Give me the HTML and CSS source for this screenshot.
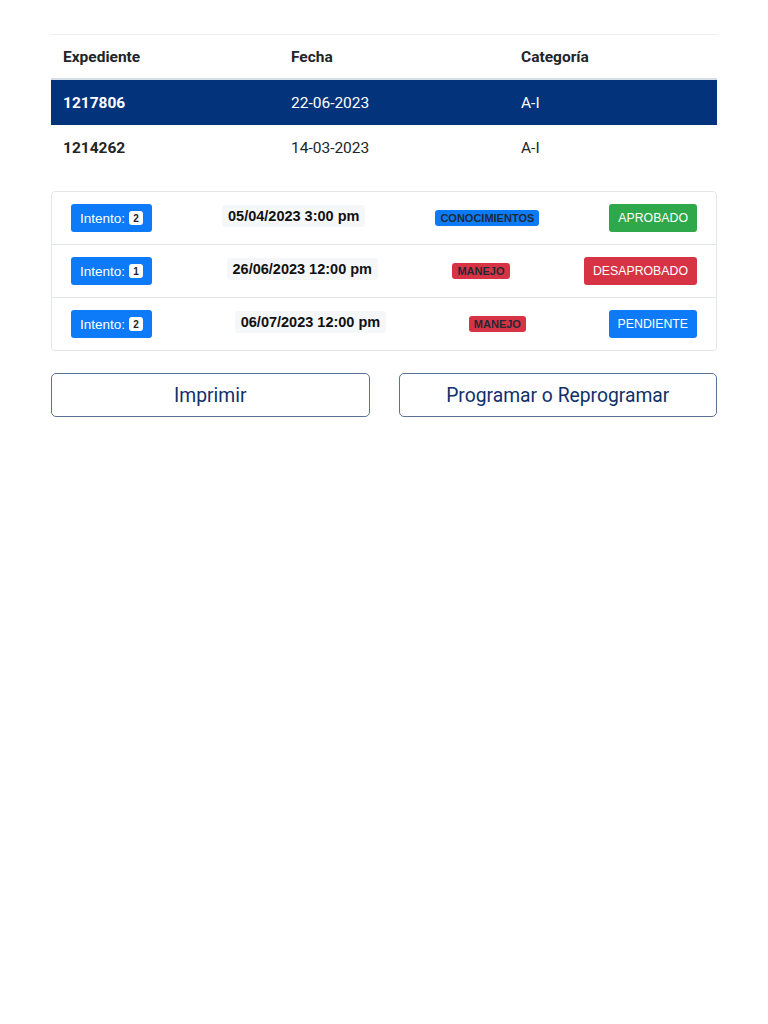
FILE: index.html
```html
<!DOCTYPE html>
<html lang="es">
<head>
    <meta charset="UTF-8">
    <title>Expedientes</title>
    <link rel="stylesheet" href="styles.css">
</head>
<body>
    <div class="container">
        <table class="exp-table">
            <thead>
                <tr>
                    <th class="col-exp">Expediente</th>
                    <th class="col-fecha">Fecha</th>
                    <th>Categoría</th>
                </tr>
            </thead>
            <tbody>
                <tr class="selected">
                    <td class="num">1217806</td>
                    <td>22-06-2023</td>
                    <td>A-I</td>
                </tr>
                <tr>
                    <td class="num">1214262</td>
                    <td>14-03-2023</td>
                    <td>A-I</td>
                </tr>
            </tbody>
        </table>

        <div class="attempts">
            <div class="attempt">
                <span class="intento">Intento: <span class="count">2</span></span>
                <span class="date">05/04/2023 3:00 pm</span>
                <span class="tag tag-blue">CONOCIMIENTOS</span>
                <span class="status status-ok">APROBADO</span>
            </div>
            <div class="attempt">
                <span class="intento">Intento: <span class="count">1</span></span>
                <span class="date">26/06/2023 12:00 pm</span>
                <span class="tag tag-red">MANEJO</span>
                <span class="status status-fail">DESAPROBADO</span>
            </div>
            <div class="attempt">
                <span class="intento">Intento: <span class="count">2</span></span>
                <span class="date">06/07/2023 12:00 pm</span>
                <span class="tag tag-red">MANEJO</span>
                <span class="status status-wait">PENDIENTE</span>
            </div>
        </div>

        <div class="actions">
            <button class="btn">Imprimir</button>
            <button class="btn">Programar o Reprogramar</button>
        </div>
    </div>
</body>
</html>
```

FILE: styles.css
```css
body {
    margin: 0;
    background-color: #ffffff;
    font-family: Roboto, "Noto Sans", sans-serif;
    color: #212529;
}

.container {
    width: 666px;
    margin: 0 auto;
    padding-top: 34px;
}

.exp-table {
    width: 100%;
    border-collapse: collapse;
    font-size: 15.5px;
    border-top: 1px solid #eceef0;
}

.exp-table th,
.exp-table td {
    text-align: left;
    padding: 0 12px;
}

.exp-table th {
    height: 43px;
    font-weight: bold;
    border-bottom: 2px solid #d6dde6;
}

.exp-table td {
    height: 45px;
}

.col-exp {
    width: 204px;
}

.col-fecha {
    width: 206px;
}

.exp-table .num {
    font-weight: bold;
}

.exp-table tr.selected {
    background-color: #03337b;
    color: #ffffff;
}

.attempts {
    margin-top: 21px;
    border: 1px solid #e3e6e9;
    border-radius: 4px;
    font-family: "Liberation Sans", Arial, sans-serif;
}

.attempt {
    display: flex;
    align-items: center;
    justify-content: space-between;
    height: 52px;
    padding: 0 19px;
    border-bottom: 1px solid #e3e6e9;
}

.attempt:last-child {
    border-bottom: none;
}

.intento {
    display: flex;
    align-items: center;
    gap: 4px;
    height: 28px;
    padding: 0 9px;
    background-color: #0d7bf7;
    color: #ffffff;
    border-radius: 3px;
    font-size: 13.5px;
}

.count {
    display: inline-flex;
    align-items: center;
    justify-content: center;
    width: 14px;
    height: 14px;
    background-color: #ffffff;
    color: #212529;
    border-radius: 3px;
    font-size: 10px;
    font-weight: bold;
}

.date {
    margin-top: -4px;
    padding: 3px 6px;
    background-color: #f6f7f8;
    border-radius: 3px;
    font-size: 14.5px;
    font-weight: bold;
    color: #111111;
}

.tag {
    padding: 2px 5px;
    border-radius: 3px;
    font-size: 11px;
    font-weight: bold;
    color: #1f2a36;
}

.tag-blue {
    background-color: #0d7bf7;
}

.tag-red {
    background-color: #d63345;
}

.status {
    display: flex;
    align-items: center;
    height: 28px;
    padding: 0 9px;
    border-radius: 3px;
    font-size: 12.3px;
    color: #ffffff;
}

.status-ok {
    background-color: #2ea84a;
}

.status-fail {
    background-color: #d63345;
}

.status-wait {
    background-color: #0d7bf7;
}

.actions {
    display: flex;
    gap: 29px;
    margin-top: 22px;
}

.btn {
    flex: 1;
    height: 44px;
    background-color: #ffffff;
    border: 1px solid #5d7396;
    border-radius: 5px;
    color: #10306a;
    font-family: Roboto, "Noto Sans", sans-serif;
    font-size: 19.3px;
    cursor: pointer;
}
```
